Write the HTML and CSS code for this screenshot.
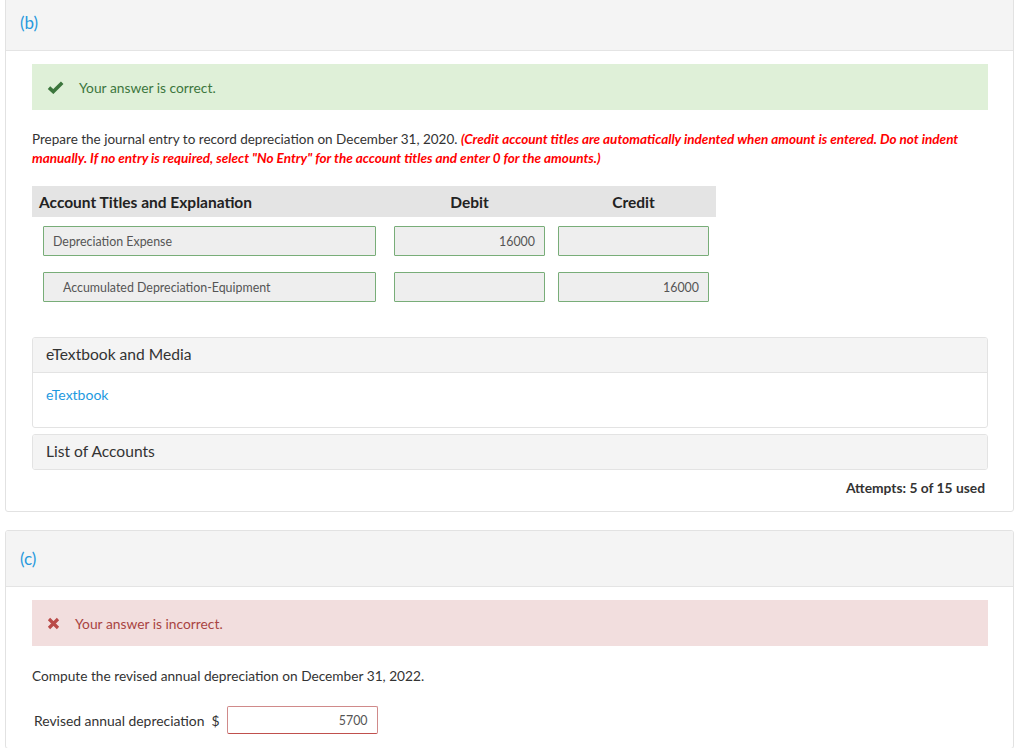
FILE: index.html
```html
<!DOCTYPE html>
<html lang="en">
<head>
<meta charset="utf-8">
<title>Question parts</title>
<link rel="stylesheet" href="styles.css">
</head>
<body>
<div class="page">
  <section class="card card-first">
    <header class="card-head"><span class="part">(b)</span></header>
    <div class="card-body">
      <div class="alert alert-ok">
        <svg class="icon-check" width="17" height="13" viewBox="0 0 17 13"><path d="M2 6.6 L6.3 10.6 L15.2 1.8" fill="none" stroke="#3c763d" stroke-width="3.6" stroke-linejoin="miter"/></svg>
        <span>Your answer is correct.</span>
      </div>
      <p class="prompt">Prepare the journal entry to record depreciation on December 31, 2020. <em class="note">(Credit account titles are automatically indented when amount is entered. Do not indent manually. If no entry is required, select "No Entry" for the account titles and enter 0 for the amounts.)</em></p>

      <div class="journal">
        <div class="jh jh-acc">Account Titles and Explanation</div>
        <div class="jh jh-debit">Debit</div>
        <div class="jh jh-credit">Credit</div>

        <div class="jc"><div class="field field-acc">Depreciation Expense</div></div>
        <div class="jc"><div class="field field-num">16000</div></div>
        <div class="jc"><div class="field field-num"></div></div>

        <div class="jc"><div class="field field-acc indent">Accumulated Depreciation-Equipment</div></div>
        <div class="jc"><div class="field field-num"></div></div>
        <div class="jc"><div class="field field-num">16000</div></div>
      </div>

      <div class="panel panel-media">
        <div class="panel-head">eTextbook and Media</div>
        <div class="panel-body"><a class="link" href="#">eTextbook</a></div>
      </div>
      <div class="panel panel-accounts">
        <div class="panel-head">List of Accounts</div>
      </div>
      <div class="attempts">Attempts: 5 of 15 used</div>
    </div>
  </section>

  <section class="card">
    <header class="card-head"><span class="part">(c)</span></header>
    <div class="card-body card-body-last">
      <div class="alert alert-bad">
        <svg class="icon-x" width="13" height="13" viewBox="0 0 13 13"><path d="M2 2 L11 11 M11 2 L2 11" fill="none" stroke="#b94a48" stroke-width="3.2"/></svg>
        <span>Your answer is incorrect.</span>
      </div>
      <p class="prompt prompt-c">Compute the revised annual depreciation on December 31, 2022.</p>
      <div class="answer-row">
        <span class="answer-label">Revised annual depreciation</span>
        <span class="dollar">$</span>
        <div class="field-red">5700</div>
      </div>
    </div>
  </section>
</div>
</body>
</html>
```
FILE: styles.css
```css
* { box-sizing: border-box; }
html, body { margin: 0; padding: 0; background: #fff; }
body {
  font-family: Lato, "Open Sans", "Liberation Sans", sans-serif;
  color: #333;
  font-size: 13.7px;
}
.page {
  margin-left: 5px;
  width: 1009px;
  display: flex;
  flex-direction: column;
  gap: 18px;
}
.card {
  border: 1px solid #e2e2e2;
  border-radius: 3px;
  background: #fff;
  overflow: hidden;
}
.card-first { margin-top: -6px; }
.card-head {
  height: 56px;
  background: #f4f4f4;
  border-bottom: 1px solid #e4e4e4;
  display: flex;
  align-items: center;
  padding-left: 14px;
}
.part { color: #2899dd; font-size: 17px; }
.card-body {
  padding: 13px 25px 15px 26px;
}
.alert {
  height: 46px;
  display: flex;
  align-items: center;
  padding-left: 15px;
  font-size: 13.8px;
}
.alert-ok { background: #dff0d8; color: #3c763d; }
.alert-ok span { margin-left: 15px; }
.alert-bad { background: #f2dede; color: #a94442; }
.alert-bad span { margin-left: 15px; }
.icon-check, .icon-x { flex: none; }
.prompt {
  margin: 20px 0 0;
  font-size: 13.5px;
  line-height: 19px;
  color: #333;
}
.prompt-c { font-size: 13.7px; }
.note {
  color: #f00;
  font-weight: bold;
  font-style: italic;
}
.journal {
  margin-top: 18px;
  width: 684px;
  display: grid;
  grid-template-columns: 362px 164px 158px;
}
.jh {
  background: #e4e4e4;
  height: 31px;
  display: flex;
  align-items: center;
  font-weight: bold;
  font-size: 15.5px;
  color: #222;
}
.jh-acc { padding-left: 7px; }
.jh-debit { justify-content: center; padding-right: 13px; }
.jh-credit { justify-content: center; padding-right: 7px; }
.jc { padding-top: 9px; padding-bottom: 7px; }
.field {
  height: 30px;
  background: #eeeeee;
  border: 1px solid #78ad78;
  border-radius: 1px;
  display: flex;
  align-items: center;
  font-size: 12.4px;
  color: #555;
  padding: 0 9px;
}
.field-acc { margin-left: 11px; width: 333px; }
.field-acc.indent { padding-left: 19px; }
.field-num { width: 151px; justify-content: flex-end; }
.panel {
  border: 1px solid #e3e3e3;
  border-radius: 3px;
  overflow: hidden;
}
.panel-media { margin-top: 28px; }
.panel-accounts { margin-top: 6px; }
.panel-head {
  height: 34px;
  background: #f4f4f4;
  display: flex;
  align-items: center;
  padding-left: 13px;
  padding-bottom: 2px;
  font-size: 15.6px;
  color: #333;
}
.panel-body {
  border-top: 1px solid #e3e3e3;
  height: 55px;
  padding: 13px 13px;
}
.link { color: #1e9ae0; text-decoration: none; font-size: 14px; }
.attempts {
  margin-top: 9px;
  text-align: right;
  font-weight: bold;
  font-size: 13.8px;
  color: #333;
  padding-right: 3px;
}
.card-body-last { padding-bottom: 14px; }
.answer-row {
  margin-top: 21px;
  display: flex;
  align-items: center;
  padding-left: 2px;
}
.answer-label { font-size: 13.9px; color: #333; }
.dollar { margin-left: 7px; font-size: 13.9px; }
.field-red {
  margin-left: 7px;
  width: 151px;
  height: 28px;
  border: 1px solid #d08a8a;
  border-bottom-color: #c0504d;
  border-radius: 2px;
  display: flex;
  align-items: center;
  justify-content: flex-end;
  padding-right: 9px;
  font-size: 12.4px;
  color: #555;
}
```
